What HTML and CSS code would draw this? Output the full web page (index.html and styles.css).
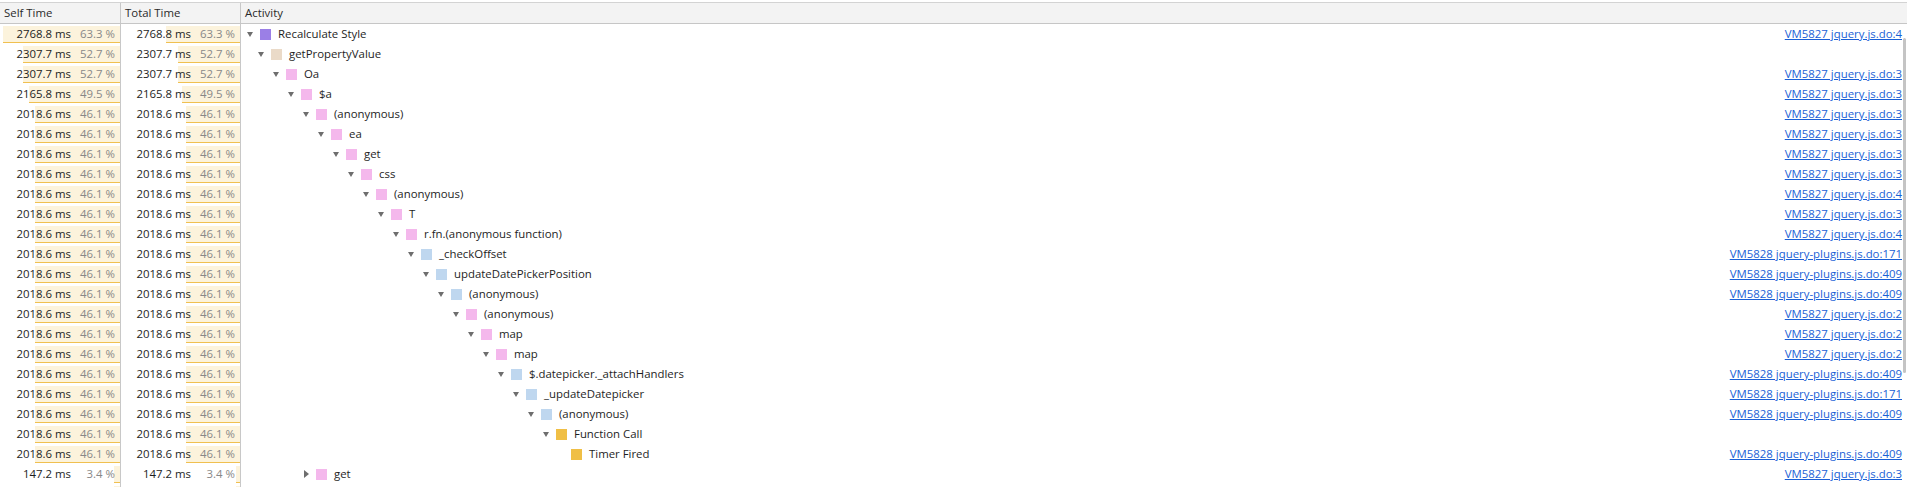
FILE: index.html
```html
<!DOCTYPE html>
<html>
<head>
<meta charset="utf-8">
<link rel="stylesheet" href="styles.css">
</head>
<body>
<div class="grid">
  <div class="row header">
    <div class="cell c-self">Self Time</div>
    <div class="cell c-total">Total Time</div>
    <div class="cell c-act">Activity</div>
  </div>

  <div class="row">
    <div class="cell c-self num"><div class="bar" style="width:117px"></div><span class="ms">2768.8 ms</span><span class="pct">63.3 %</span></div>
    <div class="cell c-total num"><div class="bar" style="width:74px"></div><span class="ms">2768.8 ms</span><span class="pct">63.3 %</span></div>
    <div class="cell c-act"><span class="node" style="padding-left:0px"><i class="tri down"></i><i class="ico purple"></i>Recalculate Style</span><a class="link">VM5827 jquery.js.do:4</a></div>
  </div>
  <div class="row">
    <div class="cell c-self num"><div class="bar" style="width:97px"></div><span class="ms">2307.7 ms</span><span class="pct">52.7 %</span></div>
    <div class="cell c-total num"><div class="bar" style="width:62px"></div><span class="ms">2307.7 ms</span><span class="pct">52.7 %</span></div>
    <div class="cell c-act"><span class="node" style="padding-left:11px"><i class="tri down"></i><i class="ico beige"></i>getPropertyValue</span></div>
  </div>
  <div class="row">
    <div class="cell c-self num"><div class="bar" style="width:97px"></div><span class="ms">2307.7 ms</span><span class="pct">52.7 %</span></div>
    <div class="cell c-total num"><div class="bar" style="width:62px"></div><span class="ms">2307.7 ms</span><span class="pct">52.7 %</span></div>
    <div class="cell c-act"><span class="node" style="padding-left:26px"><i class="tri down"></i><i class="ico pink"></i>Oa</span><a class="link">VM5827 jquery.js.do:3</a></div>
  </div>
  <div class="row">
    <div class="cell c-self num"><div class="bar" style="width:91px"></div><span class="ms">2165.8 ms</span><span class="pct">49.5 %</span></div>
    <div class="cell c-total num"><div class="bar" style="width:58px"></div><span class="ms">2165.8 ms</span><span class="pct">49.5 %</span></div>
    <div class="cell c-act"><span class="node" style="padding-left:41px"><i class="tri down"></i><i class="ico pink"></i>$a</span><a class="link">VM5827 jquery.js.do:3</a></div>
  </div>
  <div class="row">
    <div class="cell c-self num"><div class="bar" style="width:85px"></div><span class="ms">2018.6 ms</span><span class="pct">46.1 %</span></div>
    <div class="cell c-total num"><div class="bar" style="width:54px"></div><span class="ms">2018.6 ms</span><span class="pct">46.1 %</span></div>
    <div class="cell c-act"><span class="node" style="padding-left:56px"><i class="tri down"></i><i class="ico pink"></i>(anonymous)</span><a class="link">VM5827 jquery.js.do:3</a></div>
  </div>
  <div class="row">
    <div class="cell c-self num"><div class="bar" style="width:85px"></div><span class="ms">2018.6 ms</span><span class="pct">46.1 %</span></div>
    <div class="cell c-total num"><div class="bar" style="width:54px"></div><span class="ms">2018.6 ms</span><span class="pct">46.1 %</span></div>
    <div class="cell c-act"><span class="node" style="padding-left:71px"><i class="tri down"></i><i class="ico pink"></i>ea</span><a class="link">VM5827 jquery.js.do:3</a></div>
  </div>
  <div class="row">
    <div class="cell c-self num"><div class="bar" style="width:85px"></div><span class="ms">2018.6 ms</span><span class="pct">46.1 %</span></div>
    <div class="cell c-total num"><div class="bar" style="width:54px"></div><span class="ms">2018.6 ms</span><span class="pct">46.1 %</span></div>
    <div class="cell c-act"><span class="node" style="padding-left:86px"><i class="tri down"></i><i class="ico pink"></i>get</span><a class="link">VM5827 jquery.js.do:3</a></div>
  </div>
  <div class="row">
    <div class="cell c-self num"><div class="bar" style="width:85px"></div><span class="ms">2018.6 ms</span><span class="pct">46.1 %</span></div>
    <div class="cell c-total num"><div class="bar" style="width:54px"></div><span class="ms">2018.6 ms</span><span class="pct">46.1 %</span></div>
    <div class="cell c-act"><span class="node" style="padding-left:101px"><i class="tri down"></i><i class="ico pink"></i>css</span><a class="link">VM5827 jquery.js.do:3</a></div>
  </div>
  <div class="row">
    <div class="cell c-self num"><div class="bar" style="width:85px"></div><span class="ms">2018.6 ms</span><span class="pct">46.1 %</span></div>
    <div class="cell c-total num"><div class="bar" style="width:54px"></div><span class="ms">2018.6 ms</span><span class="pct">46.1 %</span></div>
    <div class="cell c-act"><span class="node" style="padding-left:116px"><i class="tri down"></i><i class="ico pink"></i>(anonymous)</span><a class="link">VM5827 jquery.js.do:4</a></div>
  </div>
  <div class="row">
    <div class="cell c-self num"><div class="bar" style="width:85px"></div><span class="ms">2018.6 ms</span><span class="pct">46.1 %</span></div>
    <div class="cell c-total num"><div class="bar" style="width:54px"></div><span class="ms">2018.6 ms</span><span class="pct">46.1 %</span></div>
    <div class="cell c-act"><span class="node" style="padding-left:131px"><i class="tri down"></i><i class="ico pink"></i>T</span><a class="link">VM5827 jquery.js.do:3</a></div>
  </div>
  <div class="row">
    <div class="cell c-self num"><div class="bar" style="width:85px"></div><span class="ms">2018.6 ms</span><span class="pct">46.1 %</span></div>
    <div class="cell c-total num"><div class="bar" style="width:54px"></div><span class="ms">2018.6 ms</span><span class="pct">46.1 %</span></div>
    <div class="cell c-act"><span class="node" style="padding-left:146px"><i class="tri down"></i><i class="ico pink"></i>r.fn.(anonymous function)</span><a class="link">VM5827 jquery.js.do:4</a></div>
  </div>
  <div class="row">
    <div class="cell c-self num"><div class="bar" style="width:85px"></div><span class="ms">2018.6 ms</span><span class="pct">46.1 %</span></div>
    <div class="cell c-total num"><div class="bar" style="width:54px"></div><span class="ms">2018.6 ms</span><span class="pct">46.1 %</span></div>
    <div class="cell c-act"><span class="node" style="padding-left:161px"><i class="tri down"></i><i class="ico blue"></i>_checkOffset</span><a class="link">VM5828 jquery-plugins.js.do:171</a></div>
  </div>
  <div class="row">
    <div class="cell c-self num"><div class="bar" style="width:85px"></div><span class="ms">2018.6 ms</span><span class="pct">46.1 %</span></div>
    <div class="cell c-total num"><div class="bar" style="width:54px"></div><span class="ms">2018.6 ms</span><span class="pct">46.1 %</span></div>
    <div class="cell c-act"><span class="node" style="padding-left:176px"><i class="tri down"></i><i class="ico blue"></i>updateDatePickerPosition</span><a class="link">VM5828 jquery-plugins.js.do:409</a></div>
  </div>
  <div class="row">
    <div class="cell c-self num"><div class="bar" style="width:85px"></div><span class="ms">2018.6 ms</span><span class="pct">46.1 %</span></div>
    <div class="cell c-total num"><div class="bar" style="width:54px"></div><span class="ms">2018.6 ms</span><span class="pct">46.1 %</span></div>
    <div class="cell c-act"><span class="node" style="padding-left:191px"><i class="tri down"></i><i class="ico blue"></i>(anonymous)</span><a class="link">VM5828 jquery-plugins.js.do:409</a></div>
  </div>
  <div class="row">
    <div class="cell c-self num"><div class="bar" style="width:85px"></div><span class="ms">2018.6 ms</span><span class="pct">46.1 %</span></div>
    <div class="cell c-total num"><div class="bar" style="width:54px"></div><span class="ms">2018.6 ms</span><span class="pct">46.1 %</span></div>
    <div class="cell c-act"><span class="node" style="padding-left:206px"><i class="tri down"></i><i class="ico pink"></i>(anonymous)</span><a class="link">VM5827 jquery.js.do:2</a></div>
  </div>
  <div class="row">
    <div class="cell c-self num"><div class="bar" style="width:85px"></div><span class="ms">2018.6 ms</span><span class="pct">46.1 %</span></div>
    <div class="cell c-total num"><div class="bar" style="width:54px"></div><span class="ms">2018.6 ms</span><span class="pct">46.1 %</span></div>
    <div class="cell c-act"><span class="node" style="padding-left:221px"><i class="tri down"></i><i class="ico pink"></i>map</span><a class="link">VM5827 jquery.js.do:2</a></div>
  </div>
  <div class="row">
    <div class="cell c-self num"><div class="bar" style="width:85px"></div><span class="ms">2018.6 ms</span><span class="pct">46.1 %</span></div>
    <div class="cell c-total num"><div class="bar" style="width:54px"></div><span class="ms">2018.6 ms</span><span class="pct">46.1 %</span></div>
    <div class="cell c-act"><span class="node" style="padding-left:236px"><i class="tri down"></i><i class="ico pink"></i>map</span><a class="link">VM5827 jquery.js.do:2</a></div>
  </div>
  <div class="row">
    <div class="cell c-self num"><div class="bar" style="width:85px"></div><span class="ms">2018.6 ms</span><span class="pct">46.1 %</span></div>
    <div class="cell c-total num"><div class="bar" style="width:54px"></div><span class="ms">2018.6 ms</span><span class="pct">46.1 %</span></div>
    <div class="cell c-act"><span class="node" style="padding-left:251px"><i class="tri down"></i><i class="ico blue"></i>$.datepicker._attachHandlers</span><a class="link">VM5828 jquery-plugins.js.do:409</a></div>
  </div>
  <div class="row">
    <div class="cell c-self num"><div class="bar" style="width:85px"></div><span class="ms">2018.6 ms</span><span class="pct">46.1 %</span></div>
    <div class="cell c-total num"><div class="bar" style="width:54px"></div><span class="ms">2018.6 ms</span><span class="pct">46.1 %</span></div>
    <div class="cell c-act"><span class="node" style="padding-left:266px"><i class="tri down"></i><i class="ico blue"></i>_updateDatepicker</span><a class="link">VM5828 jquery-plugins.js.do:171</a></div>
  </div>
  <div class="row">
    <div class="cell c-self num"><div class="bar" style="width:85px"></div><span class="ms">2018.6 ms</span><span class="pct">46.1 %</span></div>
    <div class="cell c-total num"><div class="bar" style="width:54px"></div><span class="ms">2018.6 ms</span><span class="pct">46.1 %</span></div>
    <div class="cell c-act"><span class="node" style="padding-left:281px"><i class="tri down"></i><i class="ico blue"></i>(anonymous)</span><a class="link">VM5828 jquery-plugins.js.do:409</a></div>
  </div>
  <div class="row">
    <div class="cell c-self num"><div class="bar" style="width:85px"></div><span class="ms">2018.6 ms</span><span class="pct">46.1 %</span></div>
    <div class="cell c-total num"><div class="bar" style="width:54px"></div><span class="ms">2018.6 ms</span><span class="pct">46.1 %</span></div>
    <div class="cell c-act"><span class="node" style="padding-left:296px"><i class="tri down"></i><i class="ico orange"></i>Function Call</span></div>
  </div>
  <div class="row">
    <div class="cell c-self num"><div class="bar" style="width:85px"></div><span class="ms">2018.6 ms</span><span class="pct">46.1 %</span></div>
    <div class="cell c-total num"><div class="bar" style="width:54px"></div><span class="ms">2018.6 ms</span><span class="pct">46.1 %</span></div>
    <div class="cell c-act"><span class="node" style="padding-left:311px"><i class="tri"></i><i class="ico orange"></i>Timer Fired</span><a class="link">VM5828 jquery-plugins.js.do:409</a></div>
  </div>
  <div class="row">
    <div class="cell c-self num"><div class="bar" style="width:6px"></div><span class="ms">147.2 ms</span><span class="pct">3.4 %</span></div>
    <div class="cell c-total num"><div class="bar" style="width:4px"></div><span class="ms">147.2 ms</span><span class="pct">3.4 %</span></div>
    <div class="cell c-act"><span class="node" style="padding-left:56px"><i class="tri right"></i><i class="ico pink"></i>get</span><a class="link">VM5827 jquery.js.do:3</a></div>
  </div>
  <div class="row">
    <div class="cell c-self num"><div class="bar" style="width:6px"></div></div>
    <div class="cell c-total num"><div class="bar" style="width:4px"></div></div>
    <div class="cell c-act"></div>
  </div>
</div>
<div class="scroll-thumb"></div>
</body>
</html>
```

FILE: styles.css
```css
html, body {
  margin: 0;
  padding: 0;
  background: #ffffff;
  overflow: hidden;
}
body {
  width: 1907px;
  height: 487px;
  position: relative;
  font-family: "Open Sans", "Noto Sans", sans-serif;
  font-size: 11.4px;
  color: #1e1e1e;
}
.grid {
  padding-top: 2px;
}
.row {
  display: flex;
  height: 20px;
  line-height: 20px;
}
.header {
  background: #f3f3f3;
  border-top: 1px solid #d3d3d3;
  border-bottom: 1px solid #c6c6c6;
  color: #2a2a2a;
}
.header .cell {
  padding-left: 4px;
}
.cell {
  position: relative;
  box-sizing: border-box;
  white-space: nowrap;
}
.c-self {
  width: 121px;
  border-right: 1px solid #c8c8c8;
}
.c-total {
  width: 120px;
  border-right: 1px solid #c8c8c8;
}
.c-act {
  flex: 1;
  display: flex;
  justify-content: space-between;
  padding-left: 6px;
  padding-right: 5px;
}
.num {
  display: flex;
  justify-content: flex-end;
  padding-right: 5px;
}
.bar {
  position: absolute;
  right: 0;
  top: 2px;
  bottom: 1px;
  background: #fcf3dc;
  border-bottom: 1px solid #f0c050;
  box-sizing: border-box;
}
.ms, .pct {
  position: relative;
}
.pct {
  display: inline-block;
  width: 44px;
  text-align: right;
  color: #888888;
}
.node {
  display: flex;
  align-items: center;
}
.tri {
  display: inline-block;
  width: 13px;
  height: 8px;
  position: relative;
  flex: none;
}
.tri.down::before {
  content: "";
  position: absolute;
  left: 0;
  top: 2px;
  border-left: 3.5px solid transparent;
  border-right: 3.5px solid transparent;
  border-top: 5px solid #6e6e6e;
}
.tri.right::before {
  content: "";
  position: absolute;
  left: 1px;
  top: 0;
  border-top: 4px solid transparent;
  border-bottom: 4px solid transparent;
  border-left: 5px solid #6e6e6e;
}
.ico {
  display: inline-block;
  width: 11px;
  height: 11px;
  margin-right: 7px;
  flex: none;
}
.purple { background: #9b7fe6; }
.beige { background: #eadac8; }
.pink { background: #f4b8ec; }
.blue { background: #bfd7ef; }
.orange { background: #f0bf45; }
.link {
  color: #1a5fd6;
  text-decoration: underline;
  cursor: pointer;
}
.scroll-thumb {
  position: absolute;
  right: 1px;
  top: 38px;
  width: 3px;
  height: 335px;
  background: #c4c4c4;
  border-radius: 2px;
}
```
